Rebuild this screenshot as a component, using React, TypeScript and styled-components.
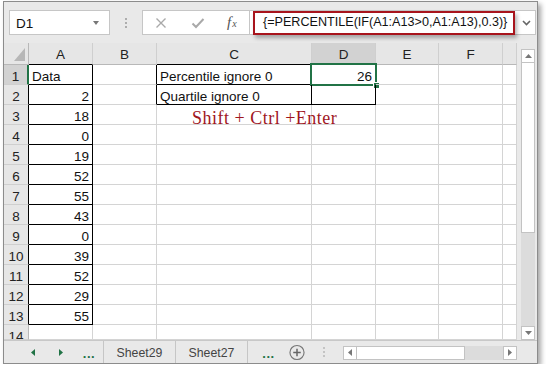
import React from 'react';
import styled, { createGlobalStyle } from 'styled-components';

const GREEN = '#217346';
const GRID = '#d4d4d4';
const HEAD_LINE = '#b8b8b8';

const GlobalStyle = createGlobalStyle`
  html, body {
    margin: 0;
    padding: 0;
    background: #fff;
  }
  body {
    font-family: 'Liberation Sans', Arial, sans-serif;
    color: #111;
  }
`;

interface Column {
  key: string;
  width: number;
}

const columns: Column[] = [
  { key: 'A', width: 64 },
  { key: 'B', width: 64 },
  { key: 'C', width: 155 },
  { key: 'D', width: 64 },
  { key: 'E', width: 63 },
  { key: 'F', width: 64 },
  { key: '', width: 14 },
];

const dataA = ['Data', '2', '18', '0', '19', '52', '55', '43', '0', '39', '52', '29', '55'];

const cellValue = (row: number, col: string): string => {
  if (col === 'A') return dataA[row - 1] ?? '';
  if (col === 'C' && row === 1) return 'Percentile ignore 0';
  if (col === 'C' && row === 2) return 'Quartile ignore 0';
  if (col === 'D' && row === 1) return '26';
  return '';
};

const boxed = (row: number, ci: number): boolean => {
  const col = columns[ci]?.key;
  if (col === 'A') return row >= 1 && row <= 13;
  if (col === 'C' || col === 'D') return row >= 1 && row <= 2;
  return false;
};

const rows = Array.from({ length: 14 }, (_, i) => i + 1);

const App: React.FC = () => {
  return (
    <>
      <GlobalStyle />
      <Window>
        <Toolbar>
          <NameBox>
            <span>D1</span>
            <Caret />
          </NameBox>
          <VDots>
            <i />
            <i />
            <i />
          </VDots>
          <FxBox>
            <svg width="12" height="12" viewBox="0 0 12 12">
              <path d="M1.5 1.5 L10.5 10.5 M10.5 1.5 L1.5 10.5" stroke="#a9a9a9" strokeWidth="1.4" fill="none" />
            </svg>
            <svg width="14" height="12" viewBox="0 0 14 12">
              <path d="M1.5 6.5 L5 10 L12.5 2" stroke="#a9a9a9" strokeWidth="2" fill="none" />
            </svg>
            <FxLabel>
              f<sub>x</sub>
            </FxLabel>
          </FxBox>
          <FormulaInput>
            <RedBox>{'{=PERCENTILE(IF(A1:A13>0,A1:A13),0.3)}'}</RedBox>
            <Expand>
              <svg width="9" height="6" viewBox="0 0 9 6">
                <path d="M1 1 L4.5 4.5 L8 1" stroke="#666" strokeWidth="1.6" fill="none" />
              </svg>
            </Expand>
          </FormulaInput>
        </Toolbar>

        <SheetArea>
          <GridWrap>
            <Grid>
              <Corner />
              {columns.map((c, ci) => (
                <ColHeader
                  key={'h' + ci}
                  $active={c.key === 'D'}
                  $bottom={c.key === 'D' ? GREEN : boxed(1, ci) ? '#000' : HEAD_LINE}
                >
                  {c.key}
                </ColHeader>
              ))}
              {rows.map((r) => (
                <React.Fragment key={r}>
                  <RowHeader $active={r === 1} $right={r === 1 ? GREEN : boxed(r, 0) ? '#000' : HEAD_LINE}>
                    {r}
                  </RowHeader>
                  {columns.map((c, ci) => {
                    const v = cellValue(r, c.key);
                    const right = boxed(r, ci) || boxed(r, ci + 1) ? '#000' : GRID;
                    const bottom = boxed(r, ci) || boxed(r + 1, ci) ? '#000' : GRID;
                    const isNum = v !== '' && !isNaN(Number(v));
                    return (
                      <Cell key={c.key + ci} $right={right} $bottom={bottom} $num={isNum} $selected={c.key === 'D' && r === 1}>
                        {v}
                      </Cell>
                    );
                  })}
                </React.Fragment>
              ))}
            </Grid>
            <Note>Shift + Ctrl +Enter</Note>
          </GridWrap>
          <VScroll>
            <ArrowBtn $h={14}>
              <svg width="7" height="4" viewBox="0 0 7 4"><path d="M0 4 L3.5 0 L7 4Z" fill="#777" /></svg>
            </ArrowBtn>
            <VThumb />
            <VTrack />
            <ArrowBtn $h={14}>
              <svg width="7" height="4" viewBox="0 0 7 4"><path d="M0 0 L3.5 4 L7 0Z" fill="#777" /></svg>
            </ArrowBtn>
          </VScroll>
        </SheetArea>

        <TabBar>
          <NavGroup>
            <NavSlot>
              <svg width="4" height="7" viewBox="0 0 4 7"><path d="M4 0 L0 3.5 L4 7Z" fill={GREEN} /></svg>
            </NavSlot>
            <NavSlot>
              <svg width="4" height="7" viewBox="0 0 4 7"><path d="M0 0 L4 3.5 L0 7Z" fill={GREEN} /></svg>
            </NavSlot>
            <NavSlot>
              <GreenDots>...</GreenDots>
            </NavSlot>
          </NavGroup>
          <SheetTab>Sheet29</SheetTab>
          <SheetTab>Sheet27</SheetTab>
          <MoreSlot>
            <GreenDots>...</GreenDots>
          </MoreSlot>
          <AddSlot>
            <svg width="17" height="17" viewBox="0 0 17 17">
              <circle cx="8.5" cy="8.5" r="7.5" stroke="#777" strokeWidth="1.2" fill="none" />
              <path d="M8.5 4.5 V12.5 M4.5 8.5 H12.5" stroke="#666" strokeWidth="1.6" />
            </svg>
          </AddSlot>
          <SplitSlot>
            <VDots $light>
              <i />
              <i />
              <i />
            </VDots>
          </SplitSlot>
          <HScroll>
            <ArrowBtn $w={14}>
              <svg width="4" height="7" viewBox="0 0 4 7"><path d="M4 0 L0 3.5 L4 7Z" fill="#777" /></svg>
            </ArrowBtn>
            <HThumb />
            <HTrack />
            <ArrowBtn $w={14}>
              <svg width="4" height="7" viewBox="0 0 4 7"><path d="M0 0 L4 3.5 L0 7Z" fill="#777" /></svg>
            </ArrowBtn>
          </HScroll>
        </TabBar>
      </Window>
    </>
  );
};

const Window = styled.div`
  box-sizing: border-box;
  margin: 1px 0 0 3px;
  width: 535px;
  height: 363px;
  border: 1px solid #8c8c8c;
  background: #e9e9e9;
  box-shadow: 3px 3px 5px rgba(0, 0, 0, 0.35);
  display: flex;
  flex-direction: column;
`;

const Toolbar = styled.div`
  height: 41px;
  display: flex;
  align-items: flex-start;
  padding: 8px 0 0 5px;
  box-sizing: border-box;
`;

const NameBox = styled.div`
  box-sizing: border-box;
  width: 101px;
  height: 25px;
  background: #fff;
  border: 1px solid #c6c6c6;
  display: flex;
  align-items: center;
  justify-content: space-between;
  padding: 1px 10px 0 6px;
  font-size: 13.5px;
`;

const Caret = styled.span`
  width: 0;
  height: 0;
  border-left: 3.5px solid transparent;
  border-right: 3.5px solid transparent;
  border-top: 4px solid #777;
`;

const VDots = styled.div<{ $light?: boolean }>`
  width: 32px;
  height: 25px;
  display: flex;
  flex-direction: column;
  align-items: center;
  justify-content: center;
  gap: 2px;

  i {
    width: 2px;
    height: 2px;
    background: ${(p) => (p.$light ? '#c4c4c4' : '#adadad')};
  }
`;

const FxBox = styled.div`
  box-sizing: border-box;
  width: 108px;
  height: 25px;
  background: #fff;
  border: 1px solid #c6c6c6;
  display: flex;
  align-items: center;
  padding-left: 12px;
  gap: 24px;
`;

const FxLabel = styled.span`
  font-family: 'Liberation Serif', 'Times New Roman', serif;
  font-style: italic;
  font-size: 15px;
  color: #555;
  margin-left: -2px;

  sub {
    font-size: 10px;
    vertical-align: 0;
    margin-left: 1px;
  }
`;

const FormulaInput = styled.div`
  box-sizing: border-box;
  width: 286px;
  height: 25px;
  background: #fff;
  border: 1px solid #c6c6c6;
  border-left: none;
  display: flex;
  align-items: flex-end;
  padding-left: 3px;
`;

const RedBox = styled.div`
  box-sizing: border-box;
  width: 262px;
  height: 24px;
  margin-bottom: -1px;
  border: 2px solid #a8141c;
  background: #fff;
  box-shadow: 2px 3px 4px rgba(0, 0, 0, 0.3);
  font-size: 12.6px;
  line-height: 18px;
  padding-left: 8px;
  white-space: nowrap;
  color: #111;
  position: relative;
  z-index: 1;
`;

const Expand = styled.div`
  flex: 1;
  height: 23px;
  display: flex;
  align-items: center;
  justify-content: center;
  padding-left: 2px;
`;

const SheetArea = styled.div`
  height: 297px;
  display: flex;
`;

const GridWrap = styled.div`
  position: relative;
  width: 513px;
  background: #fff;
  overflow: hidden;
`;

const Grid = styled.div`
  display: grid;
  grid-template-columns: 25px ${columns.map((c) => c.width + 'px').join(' ')};
  grid-template-rows: 22px repeat(13, 20px) 15px;
  font-size: 13.5px;
`;

const HeaderBase = styled.div`
  box-sizing: border-box;
  background: #e6e6e6;
  color: #222;
  text-align: center;
  white-space: nowrap;
`;

const Corner = styled(HeaderBase)`
  position: relative;
  border-right: 1px solid ${HEAD_LINE};
  border-bottom: 1px solid ${HEAD_LINE};

  &::after {
    content: '';
    position: absolute;
    right: 3px;
    bottom: 3px;
    width: 0;
    height: 0;
    border-left: 11px solid transparent;
    border-bottom: 13px solid #b7b7b7;
  }
`;

const ColHeader = styled(HeaderBase)<{ $active: boolean; $bottom: string }>`
  line-height: 24px;
  background: ${(p) => (p.$active ? '#d2d2d2' : '#e6e6e6')};
  border-right: 1px solid #cfcfcf;
  border-bottom: ${(p) => (p.$active ? 2 : 1)}px solid ${(p) => p.$bottom};
`;

const RowHeader = styled(HeaderBase)<{ $active: boolean; $right: string }>`
  line-height: 23px;
  background: ${(p) => (p.$active ? '#d2d2d2' : '#e6e6e6')};
  border-right: ${(p) => (p.$active ? 2 : 1)}px solid ${(p) => p.$right};
  border-bottom: 1px solid #cfcfcf;
  overflow: hidden;
`;

const Cell = styled.div<{ $right: string; $bottom: string; $num: boolean; $selected: boolean }>`
  box-sizing: border-box;
  position: relative;
  border-right: 1px solid ${(p) => p.$right};
  border-bottom: 1px solid ${(p) => p.$bottom};
  line-height: 23px;
  padding: 0 3px 0 3px;
  text-align: ${(p) => (p.$num ? 'right' : 'left')};
  white-space: nowrap;
  color: #111;

  ${(p) =>
    p.$selected &&
    `
    &::before {
      content: '';
      position: absolute;
      left: -2px;
      top: -2px;
      right: -2px;
      bottom: -2px;
      border: 2px solid ${GREEN};
      pointer-events: none;
    }
    &::after {
      content: '';
      position: absolute;
      right: -5px;
      bottom: -5px;
      width: 5px;
      height: 5px;
      background: ${GREEN};
      border: 1px solid #fff;
    }
  `}
`;

const Note = styled.div`
  position: absolute;
  left: 188px;
  top: 65px;
  font-family: 'Liberation Serif', 'Times New Roman', serif;
  font-size: 18px;
  letter-spacing: 0.5px;
  color: #a0161e;
  white-space: nowrap;
`;

const VScroll = styled.div`
  width: 20px;
  display: flex;
  flex-direction: column;
  padding: 6px 0 0 4px;
  box-sizing: border-box;
`;

const ArrowBtn = styled.div<{ $w?: number; $h?: number }>`
  box-sizing: border-box;
  width: ${(p) => (p.$w ? p.$w + 'px' : '14px')};
  height: ${(p) => (p.$h ? p.$h + 'px' : '14px')};
  background: #fff;
  border: 1px solid #c3c3c3;
  display: flex;
  align-items: center;
  justify-content: center;
  flex-shrink: 0;
`;

const VThumb = styled.div`
  box-sizing: border-box;
  width: 14px;
  height: 170px;
  background: #fff;
  border: 1px solid #c3c3c3;
  border-top: none;
`;

const VTrack = styled.div`
  width: 14px;
  flex: 1;
  background: #dcdcdc;
`;

const TabBar = styled.div`
  flex: 1;
  display: flex;
  align-items: stretch;
  border-top: 1px solid #c8c8c8;
  font-size: 12.3px;
  color: #444;
`;

const NavGroup = styled.div`
  width: 100px;
  box-sizing: border-box;
  padding-left: 15px;
  display: flex;
  border-right: 1px solid #c6c6c6;
`;

const NavSlot = styled.div`
  width: 28px;
  display: flex;
  align-items: center;
  justify-content: center;
`;

const GreenDots = styled.span`
  color: ${GREEN};
  font-weight: bold;
  font-size: 13px;
  letter-spacing: 0.5px;
  line-height: 1;
  padding-top: 2px;
`;

const SheetTab = styled.div`
  width: 72px;
  box-sizing: border-box;
  border-right: 1px solid #c6c6c6;
  display: flex;
  align-items: center;
  justify-content: center;
  padding-top: 2px;
`;

const MoreSlot = styled.div`
  width: 41px;
  display: flex;
  align-items: center;
  justify-content: center;
`;

const AddSlot = styled.div`
  width: 16px;
  display: flex;
  align-items: center;
  justify-content: center;
`;

const SplitSlot = styled.div`
  width: 38px;
  display: flex;
  align-items: center;
  justify-content: center;

  ${VDots} {
    height: 20px;
  }
`;

const HScroll = styled.div`
  width: 174px;
  height: 14px;
  align-self: center;
  display: flex;
  margin-top: 1px;
`;

const HThumb = styled.div`
  box-sizing: border-box;
  width: 108px;
  height: 14px;
  background: #fff;
  border: 1px solid #c3c3c3;
  border-left: none;
`;

const HTrack = styled.div`
  flex: 1;
  background: #dcdcdc;
`;

export default App;
